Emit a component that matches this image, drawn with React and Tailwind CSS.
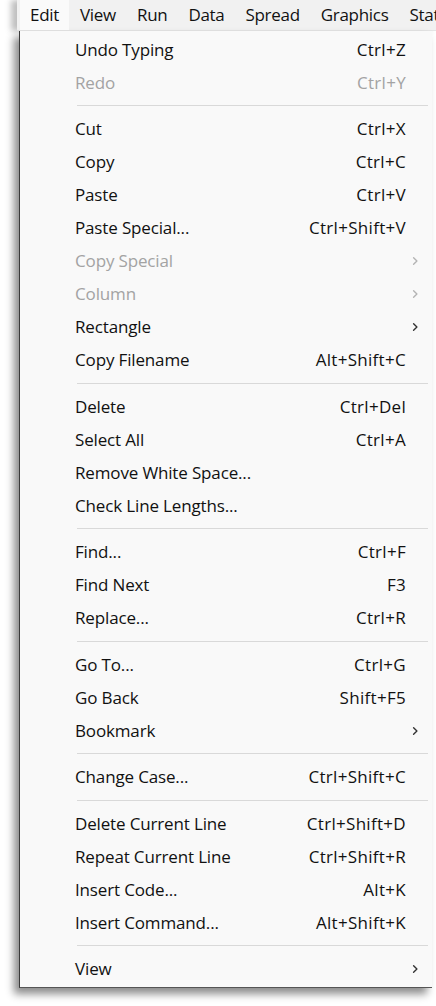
const menus = ['Edit', 'View', 'Run', 'Data', 'Spread', 'Graphics', 'Statistics']

// null = separator
const items = [
  { label: 'Undo Typing', key: 'Ctrl+Z' },
  { label: 'Redo', key: 'Ctrl+Y', off: true },
  null,
  { label: 'Cut', key: 'Ctrl+X' },
  { label: 'Copy', key: 'Ctrl+C' },
  { label: 'Paste', key: 'Ctrl+V' },
  { label: 'Paste Special...', key: 'Ctrl+Shift+V' },
  { label: 'Copy Special', sub: true, off: true },
  { label: 'Column', sub: true, off: true },
  { label: 'Rectangle', sub: true },
  { label: 'Copy Filename', key: 'Alt+Shift+C' },
  null,
  { label: 'Delete', key: 'Ctrl+Del' },
  { label: 'Select All', key: 'Ctrl+A' },
  { label: 'Remove White Space...' },
  { label: 'Check Line Lengths...' },
  null,
  { label: 'Find...', key: 'Ctrl+F' },
  { label: 'Find Next', key: 'F3' },
  { label: 'Replace...', key: 'Ctrl+R' },
  null,
  { label: 'Go To...', key: 'Ctrl+G' },
  { label: 'Go Back', key: 'Shift+F5' },
  { label: 'Bookmark', sub: true },
  null,
  { label: 'Change Case...', key: 'Ctrl+Shift+C' },
  null,
  { label: 'Delete Current Line', key: 'Ctrl+Shift+D' },
  { label: 'Repeat Current Line', key: 'Ctrl+Shift+R' },
  { label: 'Insert Code...', key: 'Alt+K' },
  { label: 'Insert Command...', key: 'Alt+Shift+K' },
  null,
  { label: 'View', sub: true },
]

function Chevron({ off }) {
  return (
    <svg className={`w-[10px] h-[10px] ${off ? 'text-[#b4b4b4]' : 'text-[#333]'}`} viewBox="0 0 10 10" fill="none" stroke="currentColor">
      <path d="M3.6 1.8 L6.9 5 L3.6 8.2" strokeWidth={1.4} strokeLinecap="round" strokeLinejoin="round" />
    </svg>
  )
}

export default function App() {
  return (
    <div className="w-[436px] h-[1006px] bg-white overflow-hidden relative font-['Open_Sans',sans-serif] text-[17px] text-[#111]">
      {/* menu bar */}
      <div className="ml-[17px] h-[31px] bg-[#f1f1f1] border-b border-[#e4e4e4] flex items-center shadow-[-6px_0_6px_rgba(0,0,0,0.25)] whitespace-nowrap">
        {menus.map((m, i) => (
          <div
            key={m}
            className={`h-full flex items-center px-[10px] tracking-[-0.3px] ${i === 0 ? 'bg-[#fafafa] ml-[3px]' : 'ml-[1px]'}`}
          >
            {m}
          </div>
        ))}
      </div>

      {/* dropdown */}
      <div className="ml-[19px] w-[413px] bg-[#f9f9f9] border-l border-[#3a3a3a] border-b border-b-[#555] pt-[2px] pb-[1px] shadow-[-5px_6px_8px_rgba(0,0,0,0.45)]">
        {items.map((it, i) =>
          it === null ? (
            <div key={i} className="h-[13.5px] flex items-center pl-[57px] pr-[4px]">
              <div className="h-px w-full bg-[#d9d9d9]" />
            </div>
          ) : (
            <div
              key={i}
              className={`h-[33px] flex items-center pl-[55px] pr-[26px] tracking-[-0.15px] ${it.off ? 'text-[#a3a3a3]' : ''}`}
            >
              <span className="flex-1">{it.label}</span>
              {it.key && <span className="tracking-[0.3px]">{it.key}</span>}
              {it.sub && (
                <span className="-mr-[14px]">
                  <Chevron off={it.off} />
                </span>
              )}
            </div>
          )
        )}
      </div>
    </div>
  )
}
